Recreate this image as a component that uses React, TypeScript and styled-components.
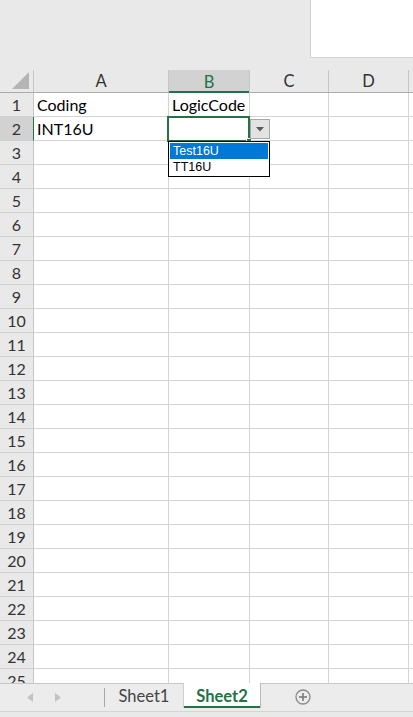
import React from "react";
import styled, { createGlobalStyle } from "styled-components";

const GlobalStyle = createGlobalStyle`
  html, body {
    margin: 0;
    padding: 0;
    background: #e9e9e9;
  }
  * {
    box-sizing: border-box;
  }
`;

const GREEN = "#217346";
const GRID = "#d4d4d4";

// widths of row header + columns A..E, border included
const COLS = [34, 135, 81, 79, 80, 60];
const LETTERS = ["A", "B", "C", "D", "E"];
const ROW_COUNT = 25;

const cells: Record<string, string> = {
  "1-0": "Coding",
  "1-1": "LogicCode",
  "2-0": "INT16U",
};

export default function App() {
  const rows = Array.from({ length: ROW_COUNT }, (_, i) => i + 1);

  return (
    <Page>
      <GlobalStyle />
      <Ribbon>
        <NameBox />
      </Ribbon>

      <Sheet>
        <HeaderRow>
          <Corner $w={COLS[0]}>
            <svg width="17" height="17" viewBox="0 0 17 17">
              <polygon points="17,0 17,17 0,17" fill="#b5b5b5" />
            </svg>
          </Corner>
          {LETTERS.map((l, i) => (
            <ColHeader key={l} $w={COLS[i + 1]} $active={i === 1}>
              {/* E sits past the window edge, its letter is not in view */}
              {i < 4 ? l : ""}
            </ColHeader>
          ))}
        </HeaderRow>

        {rows.map((r) => (
          <Row key={r}>
            <RowHeader $w={COLS[0]} $active={r === 2}>
              {r}
            </RowHeader>
            {LETTERS.map((l, c) => (
              <Cell key={l} $w={COLS[c + 1]}>
                {cells[`${r}-${c}`]}
              </Cell>
            ))}
          </Row>
        ))}

        <Selection>
          <FillHandle />
        </Selection>
        <DropButton>
          <svg width="8" height="5" viewBox="0 0 8 5">
            <polygon points="0,0 8,0 4,4.5" fill="#5a5a5a" />
          </svg>
        </DropButton>
        <DropList>
          <DropItem $selected>Test16U</DropItem>
          <DropItem>TT16U</DropItem>
        </DropList>
      </Sheet>

      <TabBar>
        <TabNav>
          <svg width="6" height="9" viewBox="0 0 6 9">
            <polygon points="6,0 6,9 0,4.5" fill="#c2c2c2" />
          </svg>
          <svg width="6" height="9" viewBox="0 0 6 9">
            <polygon points="0,0 0,9 6,4.5" fill="#c2c2c2" />
          </svg>
        </TabNav>
        <TabDivider />
        <Tab>Sheet1</Tab>
        <Tab $active>Sheet2</Tab>
        <AddSheet>
          <svg width="16" height="16" viewBox="0 0 16 16">
            <circle cx="8" cy="8" r="7" fill="none" stroke="#8a8a8a" strokeWidth="1.3" />
            <line x1="8" y1="4" x2="8" y2="12" stroke="#7a7a7a" strokeWidth="1.6" />
            <line x1="4" y1="8" x2="12" y2="8" stroke="#7a7a7a" strokeWidth="1.6" />
          </svg>
        </AddSheet>
      </TabBar>
      <StatusStrip />
    </Page>
  );
}

const Page = styled.div`
  width: 413px;
  height: 717px;
  overflow: hidden;
  display: flex;
  flex-direction: column;
  background: #e9e9e9;
  font-family: Lato, "Open Sans", sans-serif;
`;

const Ribbon = styled.div`
  height: 70px;
  flex-shrink: 0;
  display: flex;
  justify-content: flex-end;
  align-items: flex-start;
`;

const NameBox = styled.div`
  width: 103px;
  height: 58px;
  background: #ffffff;
  border: 1px solid #d2d2d2;
  border-top: none;
  border-right: none;
`;

const Sheet = styled.div`
  position: relative;
  height: 613px;
  flex-shrink: 0;
  overflow: hidden;
  background: #ffffff;
`;

const HeaderRow = styled.div`
  display: flex;
  height: 23px;
  background: #e9e9e9;
  border-bottom: 1px solid #ababab;
`;

const Corner = styled.div<{ $w: number }>`
  width: ${(p) => p.$w}px;
  flex-shrink: 0;
  display: flex;
  align-items: flex-end;
  justify-content: flex-end;
  padding: 0 4px 3px 0;
  border-right: 1px solid #c6c6c6;
`;

const ColHeader = styled.div<{ $w: number; $active?: boolean }>`
  width: ${(p) => p.$w}px;
  flex-shrink: 0;
  display: flex;
  align-items: center;
  justify-content: center;
  font-size: 16.5px;
  color: ${(p) => (p.$active ? GREEN : "#333333")};
  background: ${(p) => (p.$active ? "#d2d2d2" : "transparent")};
  border-right: 1px solid #c6c6c6;
  box-shadow: ${(p) => (p.$active ? `inset 0 -2px 0 ${GREEN}` : "none")};
  margin-bottom: ${(p) => (p.$active ? "-1px" : "0")};
`;

const Row = styled.div`
  display: flex;
  height: 24px;
`;

const RowHeader = styled.div<{ $w: number; $active?: boolean }>`
  width: ${(p) => p.$w}px;
  flex-shrink: 0;
  display: flex;
  align-items: center;
  justify-content: center;
  font-size: 16px;
  color: #333333;
  background: ${(p) => (p.$active ? "#d2d2d2" : "#e9e9e9")};
  border-right: 1px solid ${(p) => (p.$active ? GREEN : "#c6c6c6")};
  border-bottom: 1px solid #d0d0d0;
`;

const Cell = styled.div<{ $w: number }>`
  width: ${(p) => p.$w}px;
  flex-shrink: 0;
  display: flex;
  align-items: center;
  padding: 0 3px;
  font-size: 16px;
  color: #000000;
  white-space: nowrap;
  border-right: 1px solid ${GRID};
  border-bottom: 1px solid ${GRID};
`;

const Selection = styled.div`
  position: absolute;
  left: 167px;
  top: 46px;
  width: 83px;
  height: 26px;
  border: 2px solid ${GREEN};
  pointer-events: none;
`;

const FillHandle = styled.div`
  position: absolute;
  right: -4px;
  bottom: -4px;
  width: 6px;
  height: 6px;
  background: ${GREEN};
  border: 1px solid #ffffff;
`;

const DropButton = styled.div`
  position: absolute;
  left: 250px;
  top: 49px;
  width: 20px;
  height: 20px;
  display: flex;
  align-items: center;
  justify-content: center;
  background: #e3e3e3;
  border: 1px solid #a8a8a8;
`;

const DropList = styled.div`
  position: absolute;
  left: 168px;
  top: 71px;
  width: 102px;
  display: flex;
  flex-direction: column;
  padding: 1px;
  background: #ffffff;
  border: 1px solid #000000;
`;

const DropItem = styled.div<{ $selected?: boolean }>`
  height: 16px;
  display: flex;
  align-items: center;
  padding: 0 3px;
  font-family: "Liberation Sans", Arial, sans-serif;
  font-size: 12.5px;
  color: ${(p) => (p.$selected ? "#ffffff" : "#000000")};
  background: ${(p) => (p.$selected ? "#0078d7" : "transparent")};
`;

const TabBar = styled.div`
  height: 29px;
  flex-shrink: 0;
  display: flex;
  align-items: stretch;
  background: #ececec;
  border-top: 1px solid #c6c6c6;
  border-bottom: 1px solid #d4d4d4;
`;

const TabNav = styled.div`
  width: 104px;
  display: flex;
  align-items: center;
  gap: 22px;
  padding-left: 27px;
`;

const TabDivider = styled.div`
  width: 1px;
  margin: 4px 0 4px;
  background: #a8a8a8;
`;

const Tab = styled.div<{ $active?: boolean }>`
  width: 78px;
  display: flex;
  align-items: center;
  justify-content: center;
  font-size: 16.5px;
  font-weight: ${(p) => (p.$active ? 700 : 400)};
  color: ${(p) => (p.$active ? GREEN : "#444444")};
  background: ${(p) => (p.$active ? "#ffffff" : "transparent")};
  margin-top: ${(p) => (p.$active ? "-1px" : "0")};
  margin-bottom: 3px;
  border-left: ${(p) => (p.$active ? "1px solid #d0d0d0" : "none")};
  border-right: ${(p) => (p.$active ? "1px solid #b8b8b8" : "none")};
  box-shadow: ${(p) => (p.$active ? `inset 0 -2px 0 ${GREEN}` : "none")};
`;

const AddSheet = styled.div`
  display: flex;
  align-items: center;
  padding-left: 34px;
  padding-bottom: 2px;
`;

const StatusStrip = styled.div`
  flex: 1;
  background: #e9e9e9;
`;
